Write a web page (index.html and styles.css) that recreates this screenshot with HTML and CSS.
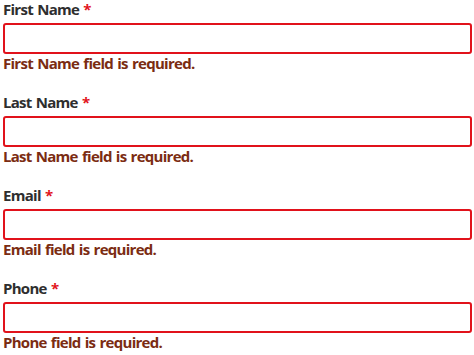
FILE: index.html
```html
<!DOCTYPE html>
<html>
<head>
<meta charset="utf-8">
<link rel="stylesheet" href="styles.css">
</head>
<body>
<form class="form">
  <div class="field">
    <label class="label">First Name <span class="req">*</span></label>
    <input class="input" type="text">
    <div class="error">First Name field is required.</div>
  </div>
  <div class="field">
    <label class="label">Last Name <span class="req">*</span></label>
    <input class="input" type="text">
    <div class="error">Last Name field is required.</div>
  </div>
  <div class="field">
    <label class="label">Email <span class="req">*</span></label>
    <input class="input" type="text">
    <div class="error">Email field is required.</div>
  </div>
  <div class="field">
    <label class="label">Phone <span class="req">*</span></label>
    <input class="input" type="text">
    <div class="error">Phone field is required.</div>
  </div>
</form>
</body>
</html>
```
FILE: styles.css
```css
html, body {
  margin: 0;
  padding: 0;
  background: #fff;
}
body {
  font-family: "Open Sans", "Liberation Sans", sans-serif;
  font-size: 15px;
  letter-spacing: -0.72px;
  word-spacing: 1px;
}
.form {
  display: flex;
  flex-direction: column;
  gap: 19px;
  padding: 0 2px 0 3px;
}
.field {
  display: flex;
  flex-direction: column;
}
.label {
  display: block;
  font-weight: 700;
  color: #2e2e2e;
  line-height: 19px;
  margin-bottom: 4px;
}
.req {
  color: #e2141c;
}
.input {
  box-sizing: border-box;
  width: 100%;
  height: 31px;
  margin: 0;
  border: 2px solid #e1121b;
  border-radius: 3px;
  background: #fff;
  padding: 0 8px;
  font: inherit;
  outline: none;
}
.error {
  font-weight: 700;
  color: #7b2c12;
  line-height: 20px;
  margin-top: -1px;
  margin-bottom: 1px;
}
```
